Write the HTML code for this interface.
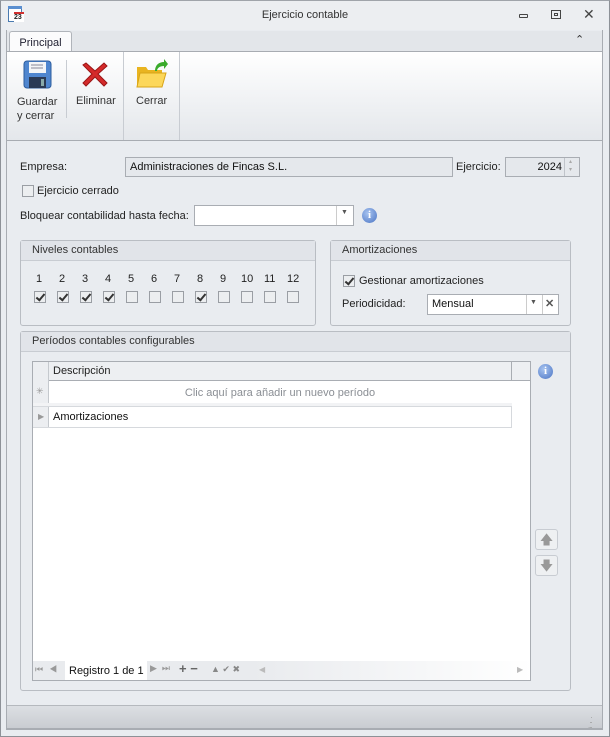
<!DOCTYPE html>
<html><head><meta charset="utf-8"><style>
*{box-sizing:border-box;margin:0;padding:0}
body{width:610px;height:737px;background:#e9ecf0;font-family:"Liberation Sans",sans-serif;font-size:11px;color:#222;position:relative;overflow:hidden}
.a{position:absolute}
.box{position:absolute;border:1px solid #a9adb3}
.grp{position:absolute;border:1px solid #b9bdc3;border-radius:3px;background:#e9ecf0}
.grp .h{height:20px;border-bottom:1px solid #c8ccd2;background:#e1e4e9;padding:3px 11px;color:#333}
.cb{position:absolute;width:12px;height:12px;border:1px solid #9a9ea4;background:#eceef0}
.cb.c::after{content:"";position:absolute;left:3px;top:0px;width:3px;height:7px;border:solid #333;border-width:0 2px 2px 0;transform:rotate(40deg)}
.info{position:absolute;width:15px;height:15px;border-radius:50%;background:radial-gradient(circle at 40% 35%,#a8c4f0,#4a74c4);color:#fff;font:bold 11px "Liberation Serif",serif;text-align:center;line-height:15px}
</style></head><body>
<div class="a" style="left:0;top:0;width:610px;height:737px;border:1px solid #8d9197;border-top-color:#a0a4aa"></div>
<div class="a" style="left:6px;top:30px;width:597px;height:700px;border-left:1px solid #a8acb2;border-right:1px solid #a8acb2;border-bottom:1px solid #a8acb2"></div>
<div class="a" style="left:1px;top:1px;width:607px;height:29px;background:#eceef1"></div>
<div class="a" style="left:8px;top:6px;width:14px;height:16px;border:1px solid #4a7ab0;background:#fff"></div>
<div class="a" style="left:8px;top:6px;width:14px;height:3px;background:#5b8fd0"></div>
<div class="a" style="left:14px;top:12px;width:10px;height:10px;background:#fff;border-top:2px solid #d03030;font:bold 7px sans-serif;color:#222;line-height:8px">23</div>
<div class="a" style="left:0;width:610px;top:9px;text-align:center;color:#333">Ejercicio contable</div>
<div class="a" style="left:519px;top:14px;width:9px;height:4px;border:1px solid #444;border-radius:1px"></div>
<div class="a" style="left:551px;top:10px;width:10px;height:9px;border:1px solid #444"></div>
<div class="a" style="left:554px;top:13px;width:4px;height:3px;border:1px solid #444"></div>
<div class="a" style="left:583px;top:6px;font-size:14px;color:#444">✕</div>
<div class="a" style="left:7px;top:31px;width:595px;height:21px;background:#e3e6ea"></div>
<div class="a" style="left:9px;top:31px;width:63px;height:22px;background:#fbfbfc;border:1px solid #b0b4ba;border-bottom:none;border-radius:3px 3px 0 0;text-align:center;padding-top:5px;color:#223">Principal</div>
<div class="a" style="left:575px;top:33px;font-size:11px;color:#333">⌃</div>
<div class="a" style="left:7px;top:51px;width:595px;height:90px;background:linear-gradient(#ffffff,#e4e7eb);border-top:1px solid #a8acb2;border-bottom:1px solid #a8acb2"></div>
<div class="a" style="left:66px;top:60px;width:1px;height:58px;background:#c8ccd2"></div>
<div class="a" style="left:123px;top:52px;width:1px;height:88px;background:#c8ccd2"></div>
<div class="a" style="left:179px;top:52px;width:1px;height:88px;background:#c8ccd2"></div>
<svg class="a" style="left:23px;top:60px" width="29" height="29" viewBox="0 0 29 29"><rect x="1" y="1" width="27" height="27" rx="3" fill="#4f86cf" stroke="#2d5d9e"/><rect x="6" y="2" width="17" height="11" fill="#f4f6f8"/><line x1="8" y1="5" x2="20" y2="5" stroke="#889"/><line x1="8" y1="8" x2="20" y2="8" stroke="#889"/><rect x="6" y="17" width="17" height="11" fill="#2a3a55"/><rect x="18" y="19" width="3" height="7" fill="#8aa"/></svg>
<div class="a" style="left:17px;top:95px;color:#333;line-height:14px">Guardar<br>y cerrar</div>
<svg class="a" style="left:82px;top:61px" width="26" height="26" viewBox="0 0 26 26"><path d="M4 2L13 10L22 2L25 5L16 13L25 22L22 25L13 16L4 25L1 22L10 13L1 4Z" fill="#d42a2a" stroke="#9a1515"/></svg>
<div class="a" style="left:76px;top:95px;color:#333">Eliminar</div>
<svg class="a" style="left:135px;top:59px" width="33" height="30" viewBox="0 0 33 30"><path d="M2 8h9l2 3h14v17H2z" fill="#e9b420"/><path d="M5 14h26l-4 14H2z" fill="#fcd75a" stroke="#d8a418"/><path d="M20 12c0-6 4-9 9-9V0l4 5-4 5V7c-4 0-7 2-7 5z" fill="#3aab2c"/></svg>
<div class="a" style="left:136px;top:95px;color:#333">Cerrar</div>
<div class="a" style="left:20px;top:161px">Empresa:</div>
<div class="box" style="left:125px;top:157px;width:328px;height:20px;background:#e5e8ec;padding:3px 4px;color:#111">Administraciones de Fincas S.L.</div>
<div class="a" style="left:456px;top:161px">Ejercicio:</div>
<div class="box" style="left:505px;top:157px;width:75px;height:20px;background:#e5e8ec;padding:3px 17px 0 0;text-align:right;color:#111">2024</div>
<div class="a" style="left:564px;top:158px;width:1px;height:18px;background:#c0c4ca"></div>
<div class="a" style="left:569px;top:158px;font-size:6px;color:#aaa;line-height:8px">▴<br>▾</div>
<div class="cb" style="left:22px;top:185px"></div>
<div class="a" style="left:37px;top:185px">Ejercicio cerrado</div>
<div class="a" style="left:20px;top:210px">Bloquear contabilidad hasta fecha:</div>
<div class="box" style="left:194px;top:205px;width:160px;height:21px;background:#fff"></div>
<div class="a" style="left:336px;top:206px;width:1px;height:19px;background:#ccc"></div>
<div class="a" style="left:341px;top:209px;font-size:7px;color:#555">▼</div>
<div class="info" style="left:362px;top:208px">i</div>
<div class="grp" style="left:20px;top:240px;width:296px;height:86px"><div class="h">Niveles contables</div></div>
<div class="a" style="left:36px;top:273px">
<span class="a" style="left:0">1</span><span class="a" style="left:23px">2</span><span class="a" style="left:46px">3</span><span class="a" style="left:69px">4</span><span class="a" style="left:92px">5</span><span class="a" style="left:115px">6</span><span class="a" style="left:138px">7</span><span class="a" style="left:161px">8</span><span class="a" style="left:184px">9</span><span class="a" style="left:205px">10</span><span class="a" style="left:228px">11</span><span class="a" style="left:251px">12</span></div>
<div class="cb c" style="left:34px;top:291px"></div><div class="cb c" style="left:57px;top:291px"></div><div class="cb c" style="left:80px;top:291px"></div><div class="cb c" style="left:103px;top:291px"></div><div class="cb" style="left:126px;top:291px"></div><div class="cb" style="left:149px;top:291px"></div><div class="cb" style="left:172px;top:291px"></div><div class="cb c" style="left:195px;top:291px"></div><div class="cb" style="left:218px;top:291px"></div><div class="cb" style="left:241px;top:291px"></div><div class="cb" style="left:264px;top:291px"></div><div class="cb" style="left:287px;top:291px"></div>
<div class="grp" style="left:330px;top:240px;width:241px;height:86px"><div class="h">Amortizaciones</div></div>
<div class="cb c" style="left:343px;top:275px"></div>
<div class="a" style="left:359px;top:275px">Gestionar amortizaciones</div>
<div class="a" style="left:342px;top:298px">Periodicidad:</div>
<div class="box" style="left:427px;top:294px;width:132px;height:21px;background:#fff;padding:3px 4px;color:#111">Mensual</div>
<div class="a" style="left:526px;top:295px;width:1px;height:19px;background:#ccc"></div>
<div class="a" style="left:542px;top:295px;width:1px;height:19px;background:#ccc"></div>
<div class="a" style="left:530px;top:299px;font-size:7px;color:#555">▼</div>
<div class="a" style="left:545px;top:297px;font-size:11px;font-weight:bold;color:#555">✕</div>
<div class="grp" style="left:20px;top:331px;width:551px;height:360px"><div class="h">Períodos contables configurables</div></div>
<div class="box" style="left:32px;top:361px;width:499px;height:320px;background:#fff"></div>
<div class="a" style="left:33px;top:362px;width:497px;height:19px;background:#edeff2;border-bottom:1px solid #a9adb3"></div>
<div class="a" style="left:48px;top:362px;width:1px;height:65px;background:#c5c9ce"></div>
<div class="a" style="left:511px;top:362px;width:1px;height:19px;background:#a9adb3"></div>
<div class="a" style="left:33px;top:362px;width:15px;height:65px;background:#eceef1"></div>
<div class="a" style="left:53px;top:365px">Descripción</div>
<div class="a" style="left:36px;top:386px;font-size:9px;color:#999">✳</div>
<div class="a" style="left:49px;top:387px;width:462px;text-align:center;color:#8a8e94">Clic aquí para añadir un nuevo período</div>
<div class="a" style="left:33px;top:403px;width:479px;height:4px;background:#f2f3f5"></div>
<div class="a" style="left:33px;top:406px;width:479px;height:1px;background:#d6d9dd"></div>
<div class="a" style="left:33px;top:427px;width:479px;height:1px;background:#d6d9dd"></div>
<div class="a" style="left:511px;top:406px;width:1px;height:22px;background:#d6d9dd"></div>
<div class="a" style="left:38px;top:412px;font-size:8px;color:#999">▶</div>
<div class="a" style="left:53px;top:411px;color:#111">Amortizaciones</div>
<div class="a" style="left:33px;top:661px;width:497px;height:19px;background:linear-gradient(90deg,#e9ebee 220px,#fff 500px)"></div>
<div class="a" style="left:65px;top:661px;width:82px;height:19px;background:#fff"></div>
<div class="a" style="left:35px;top:664px;font-size:9px;color:#999;letter-spacing:6px">⏮◀</div>
<div class="a" style="left:69px;top:665px;color:#111">Registro 1 de 1</div>
<div class="a" style="left:150px;top:663px;font-size:9px;color:#999;letter-spacing:5px">▶⏭</div>
<div class="a" style="left:179px;top:661px;font-size:13px;color:#666;font-weight:bold">+ −</div>
<div class="a" style="left:211px;top:664px;font-size:9px;color:#888">▲ ✔ ✖</div>
<div class="a" style="left:259px;top:665px;font-size:8px;color:#bbb">◀</div>
<div class="a" style="left:517px;top:665px;font-size:8px;color:#bbb">▶</div>
<div class="info" style="left:538px;top:364px">i</div>
<div class="a" style="left:535px;top:529px;width:23px;height:21px;border:1px solid #c8ccd2;border-radius:3px;background:#eef0f2;color:#999;text-align:center;font-size:13px;line-height:19px">🡅</div>
<div class="a" style="left:535px;top:555px;width:23px;height:21px;border:1px solid #c8ccd2;border-radius:3px;background:#eef0f2;color:#999;text-align:center;font-size:13px;line-height:19px">🡇</div>
<div class="a" style="left:7px;top:705px;width:595px;height:24px;background:linear-gradient(#dcdfe3,#c9ccd1);border-top:1px solid #b5b9be;border-bottom:1px solid #a8acb2"></div>
<div class="a" style="left:588px;top:713px;font-size:8px;color:#999;letter-spacing:-1px;line-height:5px">&nbsp;&nbsp;.<br>&nbsp;..<br>...</div>
</body></html>
